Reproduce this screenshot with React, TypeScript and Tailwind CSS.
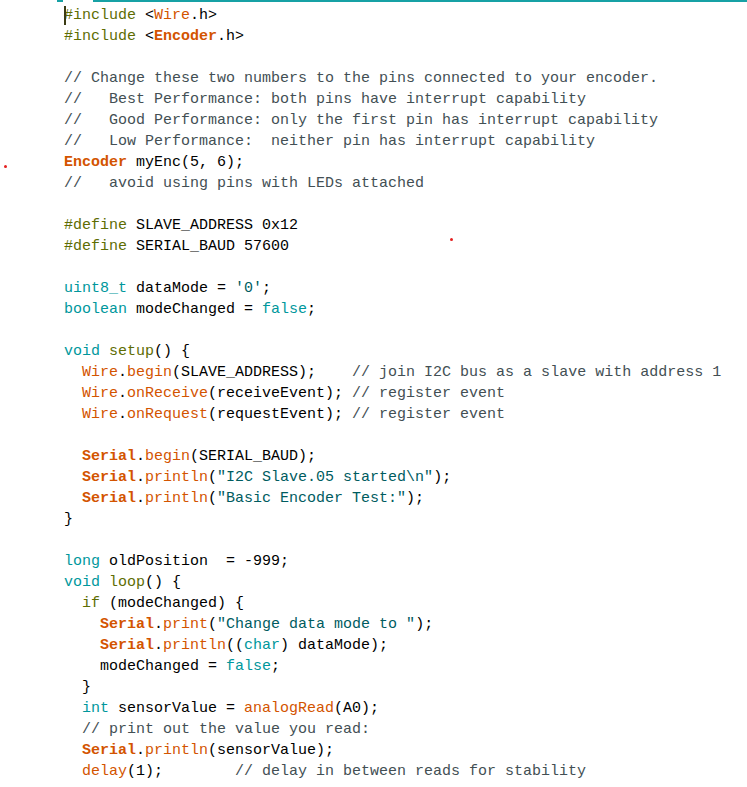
import React from 'react';

// token styles, Arduino IDE palette
const PRE = 'text-[#5e6d03]';
const FN = 'text-[#d35400]';
const KW1 = 'text-[#d35400] font-bold';
const TYPE = 'text-[#00979c]';
const STR = 'text-[#005c5f]';
const CMT = 'text-[#434f54]';
const TXT = 'text-[#000000]';

type Tok = [string, string?];

const lines: Tok[][] = [
  [['#include', PRE], [' <', TXT], ['Wire', FN], ['.h>', TXT]],
  [['#include', PRE], [' <', TXT], ['Encoder', KW1], ['.h>', TXT]],
  [],
  [['// Change these two numbers to the pins connected to your encoder.', CMT]],
  [['//   Best Performance: both pins have interrupt capability', CMT]],
  [['//   Good Performance: only the first pin has interrupt capability', CMT]],
  [['//   Low Performance:  neither pin has interrupt capability', CMT]],
  [['Encoder', KW1], [' myEnc(5, 6);', TXT]],
  [['//   avoid using pins with LEDs attached', CMT]],
  [],
  [['#define', PRE], [' SLAVE_ADDRESS 0x12', TXT]],
  [['#define', PRE], [' SERIAL_BAUD 57600', TXT]],
  [],
  [['uint8_t', TYPE], [' dataMode = ', TXT], ["'0'", STR], [';', TXT]],
  [['boolean', TYPE], [' modeChanged = ', TXT], ['false', TYPE], [';', TXT]],
  [],
  [['void', TYPE], [' ', TXT], ['setup', PRE], ['() {', TXT]],
  [['  ', TXT], ['Wire', FN], ['.', TXT], ['begin', FN], ['(SLAVE_ADDRESS);    ', TXT], ['// join I2C bus as a slave with address 1', CMT]],
  [['  ', TXT], ['Wire', FN], ['.', TXT], ['onReceive', FN], ['(receiveEvent); ', TXT], ['// register event', CMT]],
  [['  ', TXT], ['Wire', FN], ['.', TXT], ['onRequest', FN], ['(requestEvent); ', TXT], ['// register event', CMT]],
  [],
  [['  ', TXT], ['Serial', KW1], ['.', TXT], ['begin', FN], ['(SERIAL_BAUD);', TXT]],
  [['  ', TXT], ['Serial', KW1], ['.', TXT], ['println', FN], ['(', TXT], ['"I2C Slave.05 started\\n"', STR], [');', TXT]],
  [['  ', TXT], ['Serial', KW1], ['.', TXT], ['println', FN], ['(', TXT], ['"Basic Encoder Test:"', STR], [');', TXT]],
  [['}', TXT]],
  [],
  [['long', TYPE], [' oldPosition  = -999;', TXT]],
  [['void', TYPE], [' ', TXT], ['loop', PRE], ['() {', TXT]],
  [['  ', TXT], ['if', PRE], [' (modeChanged) {', TXT]],
  [['    ', TXT], ['Serial', KW1], ['.', TXT], ['print', FN], ['(', TXT], ['"Change data mode to "', STR], [');', TXT]],
  [['    ', TXT], ['Serial', KW1], ['.', TXT], ['println', FN], ['((', TXT], ['char', TYPE], [') dataMode);', TXT]],
  [['    modeChanged = ', TXT], ['false', TYPE], [';', TXT]],
  [['  }', TXT]],
  [['  ', TXT], ['int', TYPE], [' sensorValue = ', TXT], ['analogRead', FN], ['(A0);', TXT]],
  [['  ', TXT], ['// print out the value you read:', CMT]],
  [['  ', TXT], ['Serial', KW1], ['.', TXT], ['println', FN], ['(sensorValue);', TXT]],
  [['  ', TXT], ['delay', FN], ['(1);        ', TXT], ['// delay in between reads for stability', CMT]],
];

export default function App() {
  return (
    <div className="relative w-[747px] h-[787px] overflow-hidden bg-white">
      {/* tab strip underline */}
      <div className="flex h-[2px]">
        <div className="w-[57px]" />
        <div className="w-[6px] bg-[#17a1a5]" />
        <div className="w-[30px]" />
        <div className="grow bg-[#17a1a5]" />
      </div>

      <div className="relative pl-[64px] pt-[3px] font-['Liberation_Mono','Courier_New',monospace] text-[15px] leading-[21px] whitespace-pre">
        {/* caret */}
        <div className="absolute left-[64px] top-[4px] w-[2px] h-[19px] bg-[#3b3b14]" />
        {lines.map((line, i) => (
          <div key={i} className="h-[21px]">
            {line.map(([text, cls], j) => (
              <span key={j} className={cls}>{text}</span>
            ))}
          </div>
        ))}
      </div>

      {/* stray red marks */}
      <div className="absolute left-[4px] top-[165px] w-[3px] h-[3px] rounded-full bg-[#e52020]" />
      <div className="absolute left-[450px] top-[238px] w-[3px] h-[3px] rounded-full bg-[#e52020]" />
    </div>
  );
}
